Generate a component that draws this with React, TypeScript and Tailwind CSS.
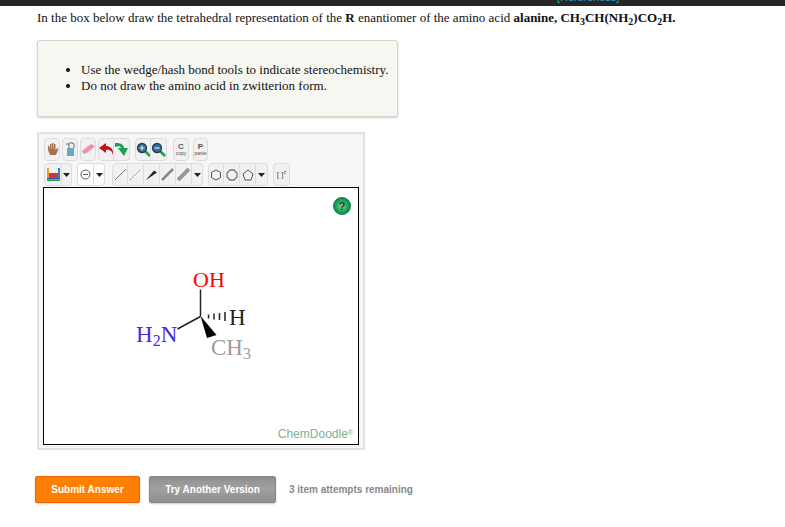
import React from "react";

const Btn = ({ w = 16, cls = "", children }: { w?: number; cls?: string; children?: React.ReactNode }) => (
  <div style={{ width: w }} className={`h-[23px] flex items-center justify-center border border-[#dcdcdc] bg-[#f1f1f1] rounded-[4px] ${cls}`}>{children}</div>
);
const Caret = () => <svg width="7" height="4"><path d="M0 0h7L3.500 4z" fill="#222" /></svg>;
const Line = ({ sw = 1, c = "#777", dash }: { sw?: number; c?: string; dash?: string }) => (
  <svg width="13" height="13"><path d="M1 12 12 1" stroke={c} strokeWidth={sw} strokeDasharray={dash} /></svg>
);
const Mag = ({ minus }: { minus?: boolean }) => (
  <svg width="15" height="15">
    <path d="M9 9l5 5" stroke="#18a050" strokeWidth="2.500" />
    <circle cx="6" cy="6" r="4.500" fill="#2f6f9f" stroke="#2d3a44" strokeWidth="1.300" />
    <path d={minus ? "M3.500 6h5" : "M3.500 6h5M6 3.500v5"} stroke="#dce8ee" strokeWidth="1.200" />
  </svg>
);

export default function App() {
  return (
    <div className="w-[785px] h-[527px] bg-white overflow-hidden font-['Liberation_Serif',serif] text-[#111]">
      <div className="h-[6px] bg-[#262626] overflow-hidden pl-[557px] font-['Liberation_Sans',sans-serif] text-[11px] leading-[12px] text-[#2aa3dc]">
        <div className="-mt-[9px]">[References]</div>
      </div>
      <div className="pl-[37px] pt-[4px] h-[20px] text-[13px] leading-[15px]">
        In the box below draw the tetrahedral representation of the <b>R</b> enantiomer of the amino acid <b>alanine, CH<sub className="text-[10px]">3</sub>CH(NH<sub className="text-[10px]">2</sub>)CO<sub className="text-[10px]">2</sub>H.</b>
      </div>
      <div className="ml-[37px] mt-[14px] w-[361px] h-[77px] bg-[#f7f7f2] border border-[#d6d6d0] rounded-[3px] shadow-[0_1px_2px_rgba(0,0,0,0.2)] pt-[21px] pl-[43px] text-[13px] leading-[16px]">
        <ul className="list-disc">
          <li>Use the wedge/hash bond tools to indicate stereochemistry.</li>
          <li>Do not draw the amino acid in zwitterion form.</li>
        </ul>
      </div>
      <div className="ml-[37px] mt-[15px] w-[328px] h-[318px] bg-[#f6f6f6] border-2 border-[#e2e2e2] pl-[4px] pt-[2px]">
        <div className="flex items-center h-[26px] pl-[1px]">
          <Btn><svg width="13" height="15"><path d="M2 8V4h1.500v2.500H4V2h1.500v4.500H6V1h1.500v5.500H8V2h1.500v6l2-2 1 1-2.500 6H4z" fill="#a8704f" /></svg></Btn>
          <Btn cls="ml-[2px]"><svg width="11" height="16"><path d="M2 7h7v8H2z" fill="#6aa8c4" /><path d="M4 7V3H1M4 2h4l1 1v4" fill="none" stroke="#666" /></svg></Btn>
          <Btn cls="ml-[2px]"><svg width="15" height="12"><path d="M1 8 10 1l4 2.500-9 7H2z" fill="#ef8fa8" /></svg></Btn>
          <div className="flex ml-[2px]">
            <Btn cls="rounded-r-none"><svg width="15" height="13"><path d="M14 13C14 8 10 6 7 7v3L0 5l7-5v3c5 0 8 4 7 10z" fill="#c1141a" /></svg></Btn>
            <Btn cls="rounded-l-none border-l-0"><svg width="15" height="13"><path d="M1 0h2c5 0 7 3 7 5h4l-4 8-6-8h3C7 3 4 3 1 4z" fill="#18a050" /></svg></Btn>
          </div>
          <div className="flex ml-[5px]">
            <Btn cls="rounded-r-none"><Mag /></Btn>
            <Btn cls="rounded-l-none border-l-0"><Mag minus /></Btn>
          </div>
          <Btn cls="ml-[6px] font-['Liberation_Sans',sans-serif] flex-col leading-none text-[#555]"><span className="text-[8px] font-bold">C</span><span className="text-[5px]">copy</span></Btn>
          <Btn w={15} cls="ml-[4px] font-['Liberation_Sans',sans-serif] flex-col leading-none text-[#555]"><span className="text-[8px] font-bold">P</span><span className="text-[5px]">paste</span></Btn>
        </div>
        <div className="flex items-center h-[25px] pl-[1px]">
          <div className="flex">
            <Btn w={18} cls="rounded-r-none"><svg width="15" height="15"><path d="M1 1h2v10H1z" fill="#e8a020" /><path d="M12 1h2v10h-2z" fill="#2f7fd8" /><path d="M3 6h9v5H3z" fill="#e03030" /><path d="M1 11h13v1.500H1z" fill="#2f55c8" /><path d="M1 12.500h13V14H1z" fill="#2aa04a" /></svg></Btn>
            <Btn w={10} cls="rounded-l-none border-l-0"><Caret /></Btn>
          </div>
          <div className="flex ml-[5px]">
            <Btn w={17} cls="rounded-r-none bg-white"><svg width="11" height="11"><circle cx="5.500" cy="5.500" r="4.500" fill="none" stroke="#555" /><path d="M3 5.500h5" stroke="#555" /></svg></Btn>
            <Btn w={11} cls="rounded-l-none border-l-0 bg-white"><Caret /></Btn>
          </div>
          <div className="flex ml-[7px]">
            <Btn cls="rounded-r-none"><Line /></Btn>
            <Btn cls="rounded-none border-l-0"><Line dash="1.500 1.500" /></Btn>
            <Btn cls="rounded-none border-l-0"><svg width="13" height="13"><path d="M1 12 9 2.500l3 2z" fill="#222" /></svg></Btn>
            <Btn cls="rounded-none border-l-0"><Line sw={2.500} c="#888" /></Btn>
            <Btn cls="rounded-none border-l-0"><Line sw={4} c="#999" /></Btn>
            <Btn w={11} cls="rounded-l-none border-l-0"><Caret /></Btn>
          </div>
          <div className="flex ml-[5px]">
            <Btn cls="rounded-r-none"><svg width="12" height="12"><path d="M6 1l4.500 2.500v5L6 11 1.500 8.500v-5z" fill="none" stroke="#555" /></svg></Btn>
            <Btn cls="rounded-none border-l-0"><svg width="12" height="12"><path d="M4 1h4l3 3v4l-3 3H4L1 8V4z" fill="none" stroke="#777" strokeWidth="1.300" /></svg></Btn>
            <Btn cls="rounded-none border-l-0"><svg width="12" height="12"><path d="M6 1l5 4-2 6H3L1 5z" fill="none" stroke="#555" /></svg></Btn>
            <Btn w={12} cls="rounded-l-none border-l-0"><Caret /></Btn>
          </div>
          <Btn w={17} cls="ml-[5px] font-['Liberation_Sans',sans-serif] text-[8px] text-[#555]">[ ]<sup className="text-[5px]">±</sup></Btn>
        </div>
        <div className="relative w-[316px] h-[258px] bg-white border-[1.500px] border-black font-['Liberation_Serif',serif]">
          <div className="absolute right-[7px] top-[9px] w-[18px] h-[18px] rounded-full bg-[radial-gradient(circle,#8fdc9f_0%,#12a04e_55%,#0b7a3a_100%)] border border-[#0b7a3a] flex items-center justify-center font-['Liberation_Sans',sans-serif] text-[11px] font-bold text-[#333]">?</div>
          <svg className="absolute left-[88px] top-[100px]" width="100" height="60">
            <path d="M68.500 1.500v27" stroke="#222" strokeWidth="1.500" />
            <path d="M68.500 28.500 45.500 41" stroke="#222" strokeWidth="1.500" />
            <path d="M68.500 28 75 50l9.500-3z" fill="#000" />
            <path d="M76.500 26.500v4M82 25.500v6M87.500 25v7M93 24v9" stroke="#222" strokeWidth="1.500" />
          </svg>
          <div className="absolute left-[149px] top-[80px] text-[22px] leading-[24px] text-[#f00]">OH</div>
          <div className="absolute left-[185px] top-[118px] text-[23px] leading-[24px] text-[#222]">H</div>
          <div className="absolute left-[92px] top-[135px] text-[23px] leading-[24px] text-[#4b24ee]">H<sub className="text-[16px]">2</sub>N</div>
          <div className="absolute left-[167px] top-[148px] text-[23px] leading-[24px] text-[#a19a9a]">CH<sub className="text-[16px]">3</sub></div>
          <div className="absolute right-[5px] bottom-[3px] font-['Liberation_Sans',sans-serif] text-[12px] leading-[13px] text-[#7fb08f]">ChemDoodle<sup className="text-[7px]">®</sup></div>
        </div>
      </div>
      <div className="flex items-center mt-[26px] ml-[35px] font-['Liberation_Sans',sans-serif] text-[10px] font-bold">
        <div className="w-[105px] h-[27px] bg-[#ff8000] border border-[#f06000] rounded-[2px] text-white flex items-center justify-center shadow-[0_1px_2px_rgba(0,0,0,0.15)]">Submit Answer</div>
        <div className="ml-[9px] w-[127px] h-[27px] bg-[linear-gradient(#8f8f8f,#a0a0a0_45%,#8f8f8f)] border border-[#888] rounded-[2px] text-white flex items-center justify-center shadow-[0_1px_2px_rgba(0,0,0,0.2)]">Try Another Version</div>
        <div className="ml-[13px] text-[#888] mb-[1px]">3 item attempts remaining</div>
      </div>
    </div>
  );
}
